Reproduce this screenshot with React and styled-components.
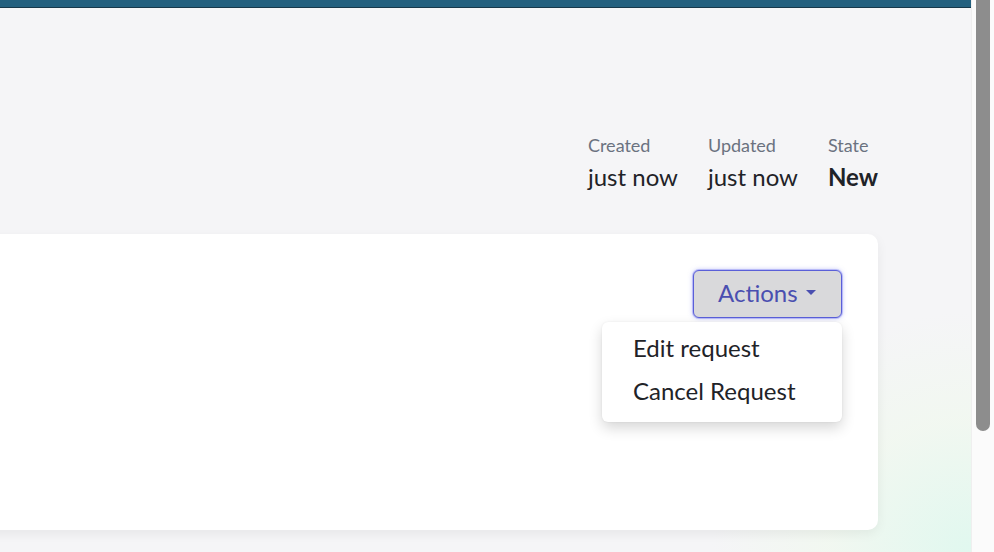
import React from "react";
import styled, { createGlobalStyle } from "styled-components";

const GlobalStyle = createGlobalStyle`
  html, body {
    margin: 0;
    padding: 0;
    height: 100%;
    overflow: hidden;
  }
  body {
    font-family: Lato, "Open Sans", "Liberation Sans", sans-serif;
    background: #f5f5f7;
  }
`;

const Shell = styled.div`
  display: flex;
  width: 994px;
  height: 552px;
`;

const Page = styled.div`
  flex: 1;
  display: flex;
  flex-direction: column;
  min-width: 0;
  overflow: hidden;
  background:
    radial-gradient(ellipse 260px 240px at 100% 100%, rgba(222, 248, 238, 0.9), rgba(238, 250, 234, 0.5) 55%, rgba(245, 245, 247, 0) 100%),
    #f5f5f7;
`;

const TopBar = styled.div`
  height: 7px;
  background: #23607f;
  border-bottom: 1px solid #16384a;
  flex-shrink: 0;
`;

const Content = styled.div`
  display: flex;
  flex-direction: column;
  align-items: flex-end;
  padding: 126px 93px 0 0;
`;

const MetaRow = styled.div`
  display: grid;
  grid-template-columns: 120px 120px auto;
`;

const MetaItem = styled.div`
  display: flex;
  flex-direction: column;
  gap: 6px;
`;

const MetaLabel = styled.span`
  font-size: 18px;
  line-height: 22px;
  color: #6b7280;
`;

const MetaValue = styled.span`
  font-size: 24px;
  line-height: 30px;
  color: #1f2328;
  font-weight: ${(p) => (p.$strong ? 700 : 400)};
`;

const Card = styled.div`
  margin-top: 42px;
  width: 1000px;
  height: 296px;
  background: #fff;
  border-radius: 10px;
  box-shadow: 0 4px 12px rgba(0, 0, 0, 0.06);
  display: flex;
  justify-content: flex-end;
  padding: 36px 36px 0 0;
  box-sizing: border-box;
`;

const ActionsWrap = styled.div`
  position: relative;
  height: 48px;
`;

const ActionsButton = styled.button`
  display: flex;
  align-items: center;
  gap: 7px;
  height: 48px;
  width: 149px;
  padding: 0 0 3px 24px;
  box-sizing: border-box;
  background: #d9d9db;
  border: 1px solid #5a5fd8;
  border-radius: 6px;
  box-shadow: 0 0 0 1px rgba(110, 115, 240, 0.35), 0 0 5px rgba(110, 115, 240, 0.5);
  color: #4a4fb0;
  font-family: inherit;
  font-size: 24px;
  cursor: pointer;
`;

const Menu = styled.ul`
  position: absolute;
  top: 52px;
  right: 0;
  width: 240px;
  margin: 0;
  padding: 4px 0 10px;
  list-style: none;
  background: #fff;
  border-radius: 6px;
  box-shadow: 0 6px 14px rgba(0, 0, 0, 0.16), 0 0 2px rgba(0, 0, 0, 0.08);
  box-sizing: border-box;
`;

const MenuItem = styled.li`
  padding: 0 31px;
  height: 43px;
  display: flex;
  align-items: center;
  font-size: 24px;
  color: #1f2328;
  cursor: pointer;
`;

const Scrollbar = styled.div`
  width: 23px;
  flex-shrink: 0;
  background: #fbfbfb;
  border-left: 1px solid #efefef;
  box-sizing: border-box;
  padding: 0 4px;
`;

const Thumb = styled.div`
  height: 431px;
  background: #8d8d8d;
  border-radius: 0 0 7px 7px;
`;

function Caret() {
  return (
    <svg width="12" height="7" viewBox="0 0 12 7" aria-hidden="true">
      <path d="M1 1h10L6 6z" fill="currentColor" />
    </svg>
  );
}

export default function App() {
  return (
    <>
      <GlobalStyle />
      <Shell>
        <Page>
          <TopBar />
          <Content>
            <MetaRow>
              <MetaItem>
                <MetaLabel>Created</MetaLabel>
                <MetaValue>just now</MetaValue>
              </MetaItem>
              <MetaItem>
                <MetaLabel>Updated</MetaLabel>
                <MetaValue>just now</MetaValue>
              </MetaItem>
              <MetaItem>
                <MetaLabel>State</MetaLabel>
                <MetaValue $strong>New</MetaValue>
              </MetaItem>
            </MetaRow>
            <Card>
              <ActionsWrap>
                <ActionsButton>
                  Actions <Caret />
                </ActionsButton>
                <Menu>
                  <MenuItem>Edit request</MenuItem>
                  <MenuItem>Cancel Request</MenuItem>
                </Menu>
              </ActionsWrap>
            </Card>
          </Content>
        </Page>
        <Scrollbar>
          <Thumb />
        </Scrollbar>
      </Shell>
    </>
  );
}
